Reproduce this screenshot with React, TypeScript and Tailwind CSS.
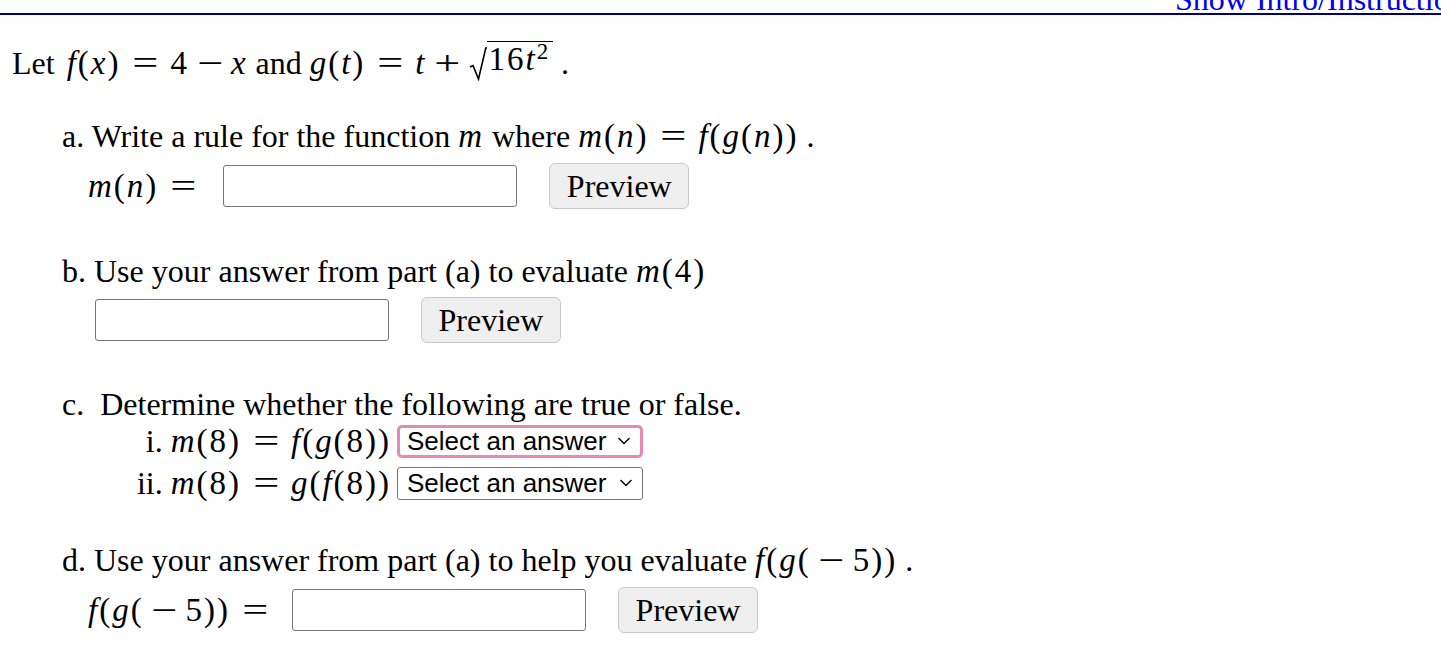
import React from 'react';

const serif = { fontFamily: '"Liberation Serif", "Times New Roman", serif' };

// math run: a touch larger and wider than the text, like MathJax output
function M({ children }: { children: React.ReactNode }) {
  return <span className="text-[33px] tracking-[0.06em]">{children}</span>;
}

// math italic variable
function V({ children }: { children: React.ReactNode }) {
  return <span className="italic">{children}</span>;
}

// relation (=) with thick spacing
function Rel({ children = '=' }: { children?: React.ReactNode }) {
  return (
    <span className="mx-[12px] inline-block w-[26px] text-center tracking-normal">
      <span className="inline-block scale-x-[1.4]">{children}</span>
    </span>
  );
}

// binary operator (+, −) with medium spacing
function Bin({ children }: { children: React.ReactNode }) {
  return (
    <span className="mx-[8px] inline-block w-[26px] text-center tracking-normal">
      <span className="inline-block scale-x-[1.4]">{children}</span>
    </span>
  );
}

function Sqrt({ children }: { children: React.ReactNode }) {
  return (
    <span className="inline-flex items-end align-baseline">
      <svg width="18" height="34" viewBox="0 0 18 34" className="translate-y-[7px]">
        <path d="M1 20 L4 18.5 L9.5 32 L16.8 1 L18 1" fill="none" stroke="black" strokeWidth="1.6" />
      </svg>
      <span className="border-t-[1.6px] border-black pr-[3px] pl-[2px] pt-[2px] leading-[30px]">{children}</span>
    </span>
  );
}

function MathInput({ className = '' }: { className?: string }) {
  return (
    <input
      type="text"
      className={`h-[42px] w-[294px] rounded-[3px] border border-[#767676] bg-white px-2 outline-none ${className}`}
    />
  );
}

function PreviewButton({ className = '' }: { className?: string }) {
  return (
    <button
      className={`h-[46px] w-[140px] rounded-[6px] border border-[#c9c9c9] bg-[#efefef] text-[32px] leading-none text-black ${className}`}
      style={serif}
    >
      Preview
    </button>
  );
}

function SelectBox({ focused = false }: { focused?: boolean }) {
  return (
    <div
      className={`relative flex h-[33px] w-[246px] items-center bg-white ${
        focused ? 'rounded-[5px] border-[3px] border-[#e58ab3] pl-[7px]' : 'rounded-[3px] border border-[#767676] pl-[9px]'
      }`}
      style={{ fontFamily: '"Liberation Sans", Arial, sans-serif' }}
    >
      <span className="text-[26px] leading-none text-black">Select an answer</span>
      <svg width="14" height="9" viewBox="0 0 14 9" className="absolute right-[9px] top-1/2 -translate-y-1/2">
        <path d="M1.5 1.5 L7 7 L12.5 1.5" fill="none" stroke="black" strokeWidth="1.4" />
      </svg>
    </div>
  );
}

export default function App() {
  return (
    <div className="min-h-screen w-full overflow-hidden bg-white text-[32px] leading-[40px] text-black" style={serif}>
      {/* Header link */}
      <div className="box-border h-[15px] overflow-hidden whitespace-nowrap border-b-2 border-[#000080] pl-[1175px]">
        <a className="-mt-[17px] block leading-[32px] text-[#0000ee]">Show Intro/Instructions</a>
      </div>

      <div className="pl-[12px]">
        <p className="mt-[25px]">
          Let{' '}
          <M>
            <span className="ml-[4px]" />
            <V>f</V>(<V>x</V>)<Rel />4<Bin>−</Bin><V>x</V>
          </M>{' '}
          and{' '}
          <M>
            <V>g</V>(<V>t</V>)<Rel /><V>t</V>
            <Bin>+</Bin>
            <Sqrt>
              16<V>t</V>
              <sup className="text-[23px]">2</sup>
            </Sqrt>
          </M>{' '}
          .
        </p>

        <div className="pl-[50px]">
          {/* a */}
          <p className="mt-[33px]">
            a. Write a rule for the function <M><V>m</V></M> where{' '}
            <M>
              <V>m</V>(<V>n</V>)<Rel /><V>f</V>(<V>g</V>(<V>n</V>))
            </M>{' '}
            .
          </p>
          <div className="mt-[7px] flex h-[46px] items-center pl-[26px]">
            <M>
              <V>m</V>(<V>n</V>)<Rel />
            </M>
            <MathInput className="ml-[15px]" />
            <PreviewButton className="ml-[32px]" />
          </div>

          {/* b */}
          <p className="mt-[42px]">
            b. Use your answer from part (a) to evaluate{' '}
            <M>
              <V>m</V>(4)
            </M>
          </p>
          <div className="mt-[6px] flex h-[46px] items-center pl-[33px]">
            <MathInput />
            <PreviewButton className="ml-[32px]" />
          </div>

          {/* c */}
          <p className="mt-[41px]">c.&nbsp; Determine whether the following are true or false.</p>
          <div className="-mt-[3px] grid grid-cols-[258px_auto] justify-start gap-x-[6px] gap-y-[2px] pl-[71px]">
            <span className="whitespace-nowrap text-right">
              i.{' '}
              <M>
                <V>m</V>(8)<Rel /><V>f</V>(<V>g</V>(8))
              </M>
            </span>
            <div className="self-center">
              <SelectBox focused />
            </div>
            <span className="whitespace-nowrap text-right">
              ii.{' '}
              <M>
                <V>m</V>(8)<Rel /><V>g</V>(<V>f</V>(8))
              </M>
            </span>
            <div className="self-center">
              <SelectBox />
            </div>
          </div>

          {/* d */}
          <p className="mt-[37px]">
            d. Use your answer from part (a) to help you evaluate{' '}
            <M>
              <V>f</V>(<V>g</V>(<Bin>−</Bin>5))
            </M>{' '}
            .
          </p>
          <div className="mt-[7px] flex h-[46px] items-center pl-[26px]">
            <M>
              <V>f</V>(<V>g</V>(<Bin>−</Bin>5))<Rel />
            </M>
            <MathInput className="ml-[12px]" />
            <PreviewButton className="ml-[32px]" />
          </div>
        </div>
      </div>
    </div>
  );
}
